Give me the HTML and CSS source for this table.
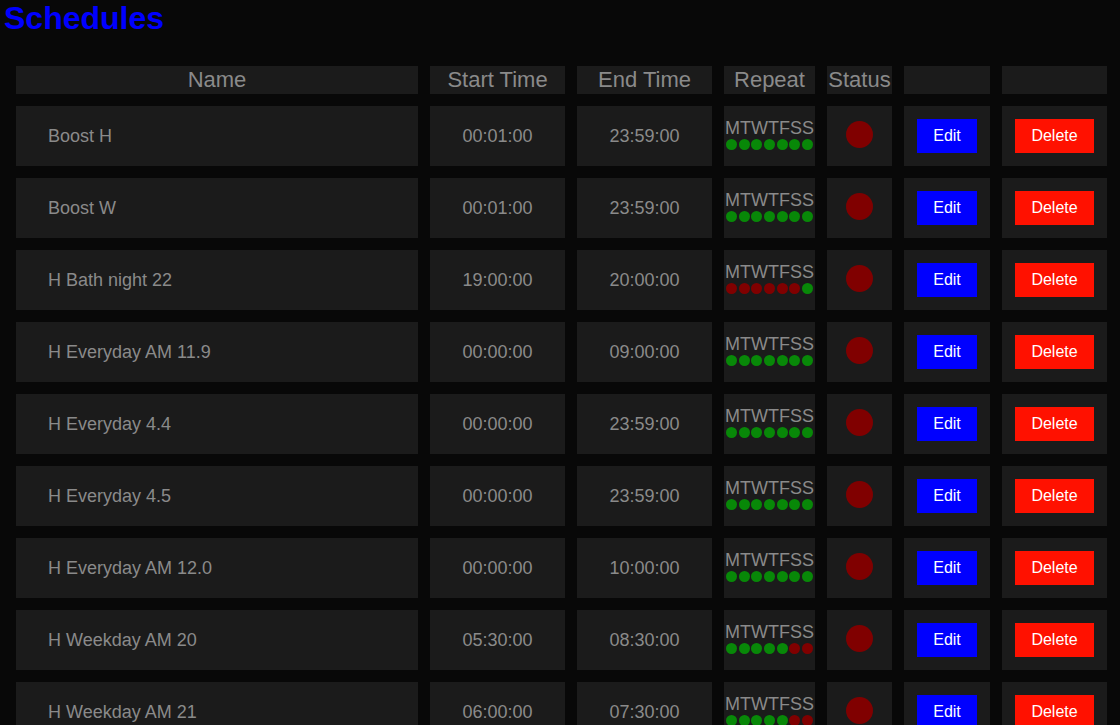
FILE: index.html
```html
<!DOCTYPE html>
<html lang="en">
<head>
<meta charset="utf-8">
<title>Schedules</title>
<link rel="stylesheet" href="styles.css">
</head>
<body>
<h1 class="title">Schedules</h1>
<table class="schedules">
  <colgroup>
    <col class="c-name"><col class="c-time"><col class="c-time"><col class="c-repeat"><col class="c-status"><col class="c-edit"><col class="c-delete">
  </colgroup>
  <thead>
    <tr><th>Name</th><th>Start Time</th><th>End Time</th><th>Repeat</th><th>Status</th><th></th><th></th></tr>
  </thead>
  <tbody>
    <tr>
      <td class="name">Boost H</td><td>00:01:00</td><td>23:59:00</td>
      <td><div class="repeat"><div class="days">MTWTFSS</div><div class="dots"><span class="dot on"></span><span class="dot on"></span><span class="dot on"></span><span class="dot on"></span><span class="dot on"></span><span class="dot on"></span><span class="dot on"></span></div></div></td>
      <td><span class="status"></span></td>
      <td><button class="btn edit">Edit</button></td><td><button class="btn delete">Delete</button></td>
    </tr>
    <tr>
      <td class="name">Boost W</td><td>00:01:00</td><td>23:59:00</td>
      <td><div class="repeat"><div class="days">MTWTFSS</div><div class="dots"><span class="dot on"></span><span class="dot on"></span><span class="dot on"></span><span class="dot on"></span><span class="dot on"></span><span class="dot on"></span><span class="dot on"></span></div></div></td>
      <td><span class="status"></span></td>
      <td><button class="btn edit">Edit</button></td><td><button class="btn delete">Delete</button></td>
    </tr>
    <tr>
      <td class="name">H Bath night 22</td><td>19:00:00</td><td>20:00:00</td>
      <td><div class="repeat"><div class="days">MTWTFSS</div><div class="dots"><span class="dot"></span><span class="dot"></span><span class="dot"></span><span class="dot"></span><span class="dot"></span><span class="dot"></span><span class="dot on"></span></div></div></td>
      <td><span class="status"></span></td>
      <td><button class="btn edit">Edit</button></td><td><button class="btn delete">Delete</button></td>
    </tr>
    <tr>
      <td class="name">H Everyday AM 11.9</td><td>00:00:00</td><td>09:00:00</td>
      <td><div class="repeat"><div class="days">MTWTFSS</div><div class="dots"><span class="dot on"></span><span class="dot on"></span><span class="dot on"></span><span class="dot on"></span><span class="dot on"></span><span class="dot on"></span><span class="dot on"></span></div></div></td>
      <td><span class="status"></span></td>
      <td><button class="btn edit">Edit</button></td><td><button class="btn delete">Delete</button></td>
    </tr>
    <tr>
      <td class="name">H Everyday 4.4</td><td>00:00:00</td><td>23:59:00</td>
      <td><div class="repeat"><div class="days">MTWTFSS</div><div class="dots"><span class="dot on"></span><span class="dot on"></span><span class="dot on"></span><span class="dot on"></span><span class="dot on"></span><span class="dot on"></span><span class="dot on"></span></div></div></td>
      <td><span class="status"></span></td>
      <td><button class="btn edit">Edit</button></td><td><button class="btn delete">Delete</button></td>
    </tr>
    <tr>
      <td class="name">H Everyday 4.5</td><td>00:00:00</td><td>23:59:00</td>
      <td><div class="repeat"><div class="days">MTWTFSS</div><div class="dots"><span class="dot on"></span><span class="dot on"></span><span class="dot on"></span><span class="dot on"></span><span class="dot on"></span><span class="dot on"></span><span class="dot on"></span></div></div></td>
      <td><span class="status"></span></td>
      <td><button class="btn edit">Edit</button></td><td><button class="btn delete">Delete</button></td>
    </tr>
    <tr>
      <td class="name">H Everyday AM 12.0</td><td>00:00:00</td><td>10:00:00</td>
      <td><div class="repeat"><div class="days">MTWTFSS</div><div class="dots"><span class="dot on"></span><span class="dot on"></span><span class="dot on"></span><span class="dot on"></span><span class="dot on"></span><span class="dot on"></span><span class="dot on"></span></div></div></td>
      <td><span class="status"></span></td>
      <td><button class="btn edit">Edit</button></td><td><button class="btn delete">Delete</button></td>
    </tr>
    <tr>
      <td class="name">H Weekday AM 20</td><td>05:30:00</td><td>08:30:00</td>
      <td><div class="repeat"><div class="days">MTWTFSS</div><div class="dots"><span class="dot on"></span><span class="dot on"></span><span class="dot on"></span><span class="dot on"></span><span class="dot on"></span><span class="dot"></span><span class="dot"></span></div></div></td>
      <td><span class="status"></span></td>
      <td><button class="btn edit">Edit</button></td><td><button class="btn delete">Delete</button></td>
    </tr>
    <tr>
      <td class="name">H Weekday AM 21</td><td>06:00:00</td><td>07:30:00</td>
      <td><div class="repeat"><div class="days">MTWTFSS</div><div class="dots"><span class="dot on"></span><span class="dot on"></span><span class="dot on"></span><span class="dot on"></span><span class="dot on"></span><span class="dot"></span><span class="dot"></span></div></div></td>
      <td><span class="status"></span></td>
      <td><button class="btn edit">Edit</button></td><td><button class="btn delete">Delete</button></td>
    </tr>
  </tbody>
</table>
</body>
</html>
```

FILE: styles.css
```css
html {
  background: #080808;
}
body {
  margin: 0 4px;
  background: #080808;
  font-family: "Liberation Sans", Arial, Helvetica, sans-serif;
  color: #8a8a8a;
}
.title {
  margin: 0 0 17px 0;
  font-size: 32px;
  line-height: 37px;
  font-weight: bold;
  color: #0000ff;
}
.schedules {
  table-layout: fixed;
  width: 1115px;
  border-collapse: separate;
  border-spacing: 12px;
  margin: 0;
}
.c-name { width: 402px; }
.c-time { width: 135px; }
.c-repeat { width: 91px; }
.c-status { width: 65px; }
.c-edit { width: 86px; }
.c-delete { width: 105px; }
.schedules th,
.schedules td {
  box-sizing: border-box;
  padding: 0;
  background: #1b1b1b;
  text-align: center;
  vertical-align: middle;
  white-space: nowrap;
}
.schedules th {
  height: 28px;
  font-size: 22px;
  font-weight: normal;
  line-height: 26px;
}
.schedules td {
  height: 60px;
  font-size: 18px;
  line-height: 20px;
}
.schedules td.name {
  text-align: left;
  text-indent: 32px;
}
.repeat {
  display: flex;
  flex-direction: column;
  align-items: center;
  padding-bottom: 4px;
}
.days {
  line-height: 20px;
}
.dots {
  display: flex;
  gap: 1.67px;
  height: 12px;
  align-items: center;
}
.dot {
  display: block;
  width: 11px;
  height: 11px;
  border-radius: 50%;
  background: #800000;
}
.dot.on {
  background: #088808;
}
.status {
  display: block;
  width: 27px;
  height: 27px;
  margin: 0 auto 3px;
  border-radius: 50%;
  background: #800000;
}
.btn {
  border: 0;
  margin: 0;
  padding: 8px 16px;
  font-family: "Liberation Sans", Arial, Helvetica, sans-serif;
  font-size: 16px;
  line-height: 18px;
  color: #ffffff;
  cursor: pointer;
}
.btn.edit {
  background: #0000ff;
}
.btn.delete {
  background: #ff1100;
}
```
